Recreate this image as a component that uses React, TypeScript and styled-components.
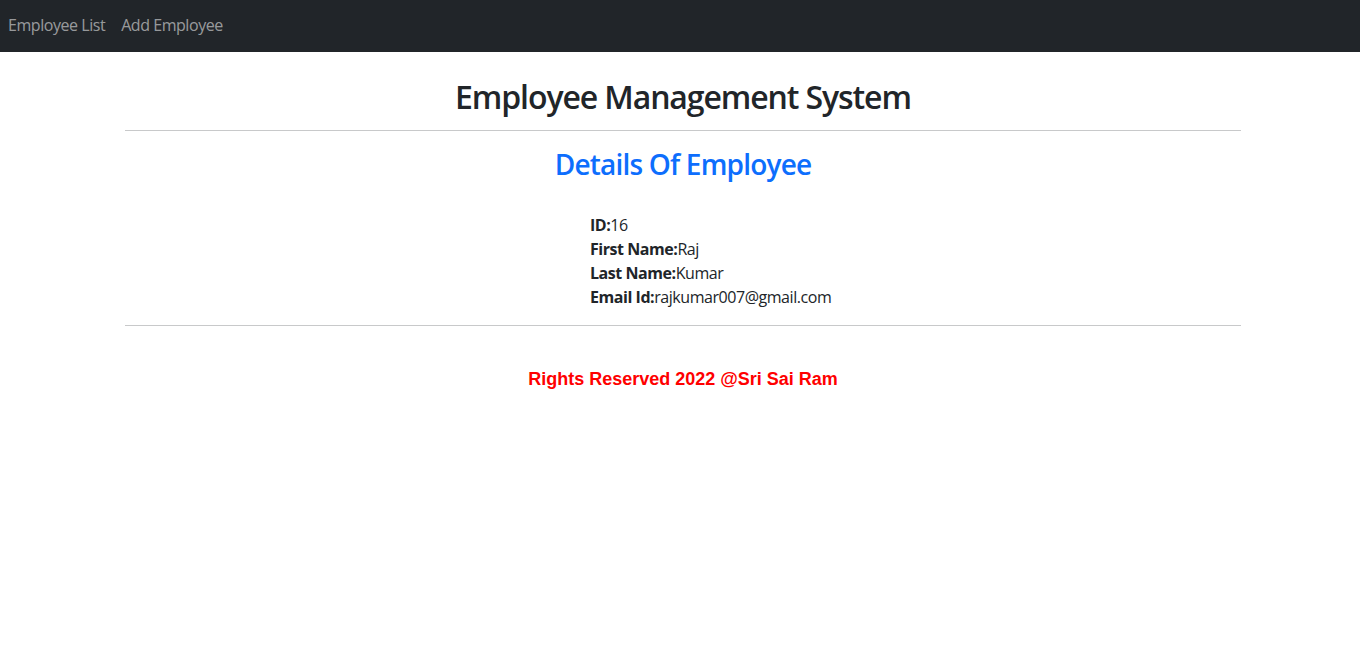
import React from 'react'
import styled, { createGlobalStyle } from 'styled-components'

const GlobalStyle = createGlobalStyle`
    body {
        margin: 0;
        font-family: "Open Sans", "Noto Sans", "Liberation Sans", sans-serif;
        font-size: 16px;
        line-height: 1.5;
        letter-spacing: -0.45px;
        color: #212529;
        background: #fff;
    }
`

const NavBar = styled.nav`
    height: 52px;
    background: #212529;
    display: flex;
    align-items: center;
    padding: 0 8px;
    gap: 16px;
`
const NavLink = styled.a`
    color: rgba(255, 255, 255, 0.55);
    text-decoration: none;
    font-size: 16px;
    margin-top: -2px;
    cursor: pointer;
    &:hover {
        color: rgba(255, 255, 255, 0.75);
    }
`
const Container = styled.div`
    width: 1116px;
    margin: 0 auto;
    padding-left: 6px;
`
const Title = styled.h2`
    margin: 26px 0 14px;
    font-size: 32px;
    font-weight: 600;
    line-height: 1.2;
    letter-spacing: -1.1px;
    text-align: center;
`
const Rule = styled.hr`
    margin: 0;
    border: 0;
    border-top: 1px solid #c8c9ca;
`
const SubTitle = styled.h3`
    margin: 17px 0 31px;
    font-size: 28px;
    font-weight: 600;
    line-height: 1.2;
    letter-spacing: -0.8px;
    text-align: center;
    color: #0d6efd;
`
const Details = styled.div`
    padding-left: 465px;
    margin-bottom: 16px;
`
const DetailRow = styled.div`
    line-height: 24px;
`
const Label = styled.b`
    font-weight: 700;
`
const Footer = styled.footer`
    margin-top: 43px;
    text-align: center;
    color: red;
    font-family: "Liberation Sans", Arial, sans-serif;
    font-weight: 700;
    font-size: 18px;
    line-height: 21px;
    letter-spacing: 0;
    padding-left: 6px;
`

const employee = {
    id: 16,
    firstName: 'Raj',
    lastName: 'Kumar',
    emailId: 'rajkumar007@gmail.com',
}

export default function App() {
    return (
        <>
            <GlobalStyle />
            <NavBar>
                <NavLink>Employee List</NavLink>
                <NavLink>Add Employee</NavLink>
            </NavBar>
            <Container>
                <Title>Employee Management System</Title>
                <Rule />
                <SubTitle>Details Of Employee</SubTitle>
                <Details>
                    <DetailRow><Label>ID:</Label>{employee.id}</DetailRow>
                    <DetailRow><Label>First Name:</Label>{employee.firstName}</DetailRow>
                    <DetailRow><Label>Last Name:</Label>{employee.lastName}</DetailRow>
                    <DetailRow><Label>Email Id:</Label>{employee.emailId}</DetailRow>
                </Details>
                <Rule />
            </Container>
            <Footer>Rights Reserved 2022 @Sri Sai Ram</Footer>
        </>
    )
}
